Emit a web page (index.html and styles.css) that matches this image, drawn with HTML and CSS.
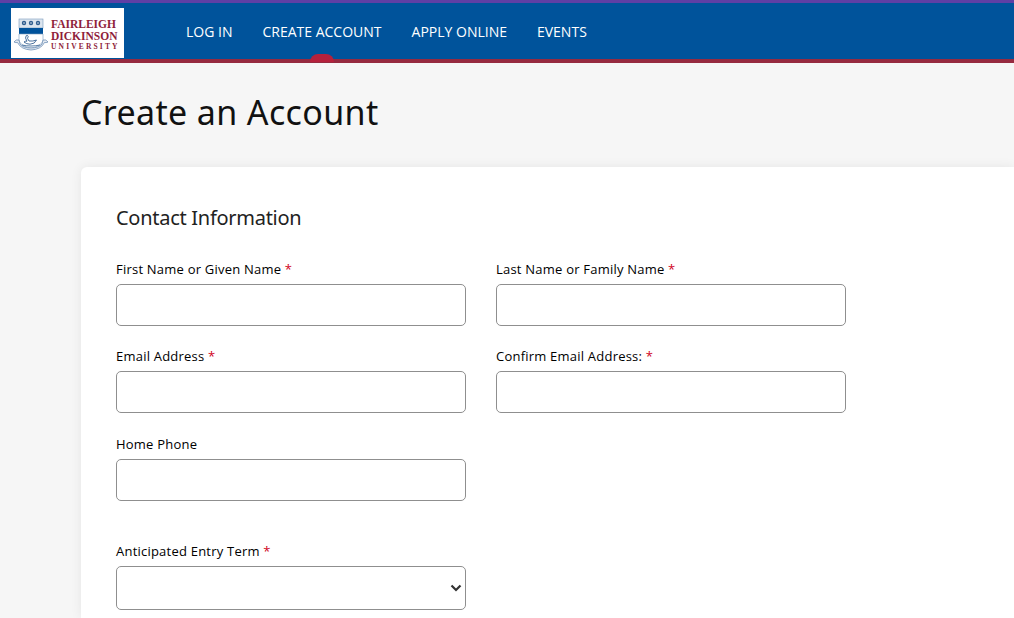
FILE: index.html
```html
<!DOCTYPE html>
<html lang="en">
<head>
<meta charset="utf-8">
<title>Create an Account</title>
<link rel="stylesheet" href="styles.css">
</head>
<body>
<header class="topbar">
  <a class="logo" href="#">
    <svg class="crest" viewBox="0 0 34 34" width="34" height="34" aria-hidden="true">
      <rect x="5" y="1" width="24" height="9" fill="#dbe4ee" stroke="#7a9abd" stroke-width=".6"/>
      <g fill="#2f5d8f">
        <circle cx="10" cy="5" r="2.200"/>
        <circle cx="17" cy="5" r="2.200"/>
        <circle cx="24" cy="5" r="2.200"/>
      </g>
      <g fill="#fff">
        <circle cx="10" cy="5" r=".7"/>
        <circle cx="17" cy="5" r=".7"/>
        <circle cx="24" cy="5" r=".7"/>
      </g>
      <rect x="5" y="10" width="24" height="6" fill="#00529b"/>
      <path d="M5 16h24v7q-3 6-12 7q-9-1-12-7z" fill="#fff" stroke="#7a9abd" stroke-width=".6"/>
      <path d="M10 24q1.500-1.200 3-.8q-2.500-3.500-.8-5.500q1.600-.8 2 .6q-1.700 1.900.8 4.700q4 .5 7.500-1q-1.500 4-6.500 4.200q-3.500 0-6-2.200z" fill="#fff" stroke="#1f4f85" stroke-width=".8"/>
      <path d="M8 27q4 1 9 1t9-1" fill="none" stroke="#2f5d8f" stroke-width=".8"/>
      <path d="M0 24q2-3 5-2l1 4q3 4 11 4t11-4l1-4q3-1 5 2q-2 1-3.500.5q-3.500 7-13.500 7.500q-10-.5-13.500-7.500q-1.500.5-3.500-.5z" fill="#e4eaf2" stroke="#5f84ad" stroke-width=".7"/>
    </svg>
    <span class="wordmark">
      <span class="wm-line">FAIRLEIGH</span>
      <span class="wm-line">DICKINSON</span>
      <span class="wm-small">UNIVERSITY</span>
    </span>
  </a>
  <nav class="nav">
    <a href="#">LOG IN</a>
    <a href="#" class="active">CREATE ACCOUNT</a>
    <a href="#">APPLY ONLINE</a>
    <a href="#">EVENTS</a>
  </nav>
</header>
<main class="page">
  <h1 class="title">Create an Account</h1>
  <section class="card">
    <h2 class="section-title">Contact Information</h2>
    <form class="form">
      <div class="field">
        <label for="f1">First Name or Given Name <span class="req">*</span></label>
        <input id="f1" type="text">
      </div>
      <div class="field">
        <label for="f2">Last Name or Family Name <span class="req">*</span></label>
        <input id="f2" type="text">
      </div>
      <div class="field">
        <label for="f3">Email Address <span class="req">*</span></label>
        <input id="f3" type="text">
      </div>
      <div class="field">
        <label for="f4">Confirm Email Address: <span class="req">*</span></label>
        <input id="f4" type="text">
      </div>
      <div class="field wide phone">
        <label for="f5">Home Phone</label>
        <input id="f5" type="text">
      </div>
      <div class="field wide term">
        <label for="f6">Anticipated Entry Term <span class="req">*</span></label>
        <select id="f6"><option></option></select>
      </div>
    </form>
  </section>
</main>
</body>
</html>
```

FILE: styles.css
```css
* { box-sizing: border-box; }
html, body { margin: 0; height: 100%; overflow: hidden; }
body {
  display: flex;
  flex-direction: column;
  background: #f6f6f6;
  color: #000;
  font-family: "Open Sans", "Liberation Sans", sans-serif;
}
.topbar {
  display: flex;
  flex: none;
  height: 63px;
  padding: 5px 0 0 11px;
  background: #00539b;
  border-top: 3px solid #5f3fa5;
  border-bottom: 4px solid #962a40;
}
.logo {
  display: flex;
  gap: 3px;
  width: 113px;
  height: 50px;
  padding: 10px 0 0 3px;
  background: #fff;
  text-decoration: none;
}
.crest { flex: none; }
.wordmark {
  display: flex;
  flex-direction: column;
  color: #8f1d3a;
  font-family: "Liberation Serif", serif;
  font-weight: 700;
  line-height: 12px;
}
.wm-line { font-size: 11.500px; }
.wm-small { font-size: 7.500px; line-height: 9px; letter-spacing: 2.150px; }
.nav {
  display: flex;
  gap: 30px;
  margin-left: 62px;
}
.nav a {
  position: relative;
  color: #fff;
  font-size: 14px;
  line-height: 48px;
  text-decoration: none;
}
.nav a.active::after {
  content: "";
  position: absolute;
  left: 50%;
  bottom: -3px;
  width: 24px;
  height: 8px;
  margin-left: -12px;
  background: #b5213c;
  border-radius: 12px 12px 0 0;
}
.page {
  display: flex;
  flex: 1;
  flex-direction: column;
  min-height: 0;
  padding-left: 81px;
}
.title {
  margin: 0;
  padding-top: 26px;
  font-family: "Noto Sans", "Open Sans", sans-serif;
  font-size: 34px;
  font-weight: 400;
  line-height: 46px;
  letter-spacing: .35px;
  color: #111;
}
.card {
  flex: 1;
  margin-top: 32px;
  padding: 37px 0 0 35px;
  background: #fff;
  border-radius: 6px 0 0 0;
  box-shadow: 0 0 12px rgba(0, 0, 0, .07);
}
.section-title {
  margin: 0 0 28px;
  font-family: "Noto Sans", "Open Sans", sans-serif;
  font-size: 20px;
  font-weight: 400;
  line-height: 28px;
  letter-spacing: -.28px;
  color: #222;
}
.form {
  display: grid;
  grid-template-columns: 350px 350px;
  column-gap: 30px;
  row-gap: 21px;
}
.field { display: flex; flex-direction: column; }
.wide { grid-column: 1; }
.phone { margin-top: 1px; }
.term { margin-top: 20px; }
label {
  margin-bottom: 6px;
  font-size: 13px;
  font-weight: 500;
  line-height: 18px;
  letter-spacing: .22px;
  color: #000;
}
.req { color: #d0021b; }
input, select {
  width: 350px;
  height: 42px;
  background: #fff;
  border: 1px solid #8f8f8f;
  border-radius: 5px;
  font: inherit;
}
select {
  height: 44px;
  appearance: none;
  background: #fff url("data:image/svg+xml,%3Csvg xmlns='http://www.w3.org/2000/svg' width='12' height='8'%3E%3Cpath d='M1.500 1.500 6 6l4.500-4.500' fill='none' stroke='%23333' stroke-width='2.200'/%3E%3C/svg%3E") no-repeat right 3px center;
}
```
